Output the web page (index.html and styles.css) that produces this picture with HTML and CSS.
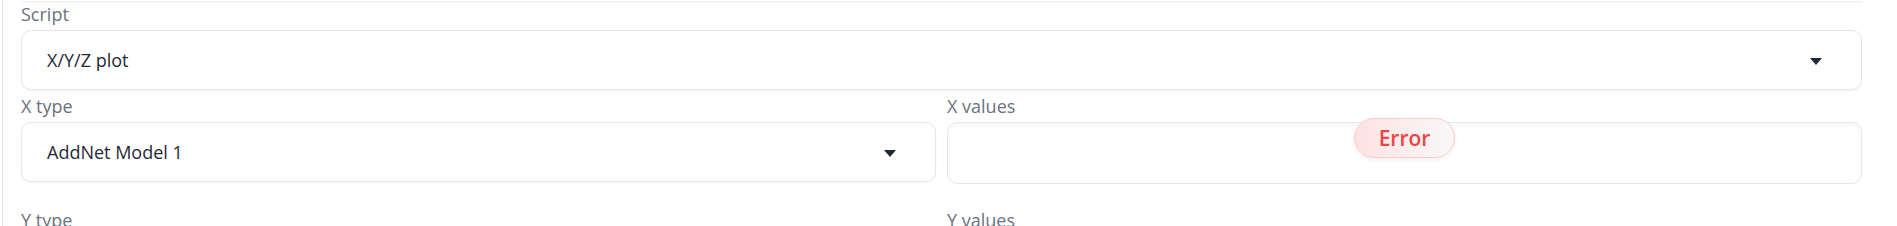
FILE: index.html
```html
<!DOCTYPE html>
<html>
<head>
  <title>X/Y/Z plot</title>
  <link rel="stylesheet" href="styles.css">
</head>
<body>
  <div class="panel">
    <div class="prev-block"></div>

    <div class="field field-script">
      <span class="label">Script</span>
      <div class="select">
        <span class="select-value">X/Y/Z plot</span>
        <svg class="arrow" width="12" height="7" viewBox="0 0 12 7"><path d="M0 0H12L6 7Z" fill="#1f2937"/></svg>
      </div>
    </div>

    <div class="row row-x">
      <div class="field">
        <span class="label">X type</span>
        <div class="select">
          <span class="select-value">AddNet Model 1</span>
          <svg class="arrow" width="12" height="7" viewBox="0 0 12 7"><path d="M0 0H12L6 7Z" fill="#1f2937"/></svg>
        </div>
      </div>
      <div class="field field-status">
        <span class="label">X values</span>
        <div class="textbox"></div>
        <div class="status">
          <span class="error-badge">Error</span>
        </div>
      </div>
    </div>

    <div class="row">
      <div class="field">
        <span class="label">Y type</span>
      </div>
      <div class="field">
        <span class="label">Y values</span>
      </div>
    </div>
  </div>
</body>
</html>
```
FILE: styles.css
```css
body {
  margin: 0;
  padding: 0;
  background-color: white;
  font-family: "Open Sans", "Noto Sans", sans-serif;
  overflow: hidden;
}

.panel {
  margin-left: 2px;
  border-left: 1px solid #e5e7eb;
  padding: 0 35px 0 18px;
  height: 226px;
}

.prev-block {
  height: 1px;
  border-bottom: 1px solid #eceef1;
  border-radius: 0 0 8px 8px;
  box-shadow: 0 1px 3px rgba(0, 0, 0, 0.04);
}

.field {
  display: flex;
  flex-direction: column;
}

.field-script {
  margin-bottom: 4px;
}

.label {
  display: block;
  font-size: 18px;
  line-height: 24px;
  color: #6b7280;
  margin-bottom: 4px;
}

.select {
  box-sizing: border-box;
  height: 60px;
  display: flex;
  align-items: center;
  justify-content: space-between;
  padding: 0 39px 0 25px;
  border: 1px solid #e5e7eb;
  border-radius: 10px;
  background-color: white;
  box-shadow: 0 1px 2px rgba(0, 0, 0, 0.05);
}

.select-value {
  font-size: 18px;
  color: #1f2937;
}

.arrow {
  display: block;
  margin-top: 2px;
}

.row {
  display: grid;
  grid-template-columns: 1fr 1fr;
  column-gap: 11px;
}

.row-x {
  margin-bottom: 24px;
}

.textbox {
  box-sizing: border-box;
  height: 62px;
  border: 1px solid #e5e7eb;
  border-radius: 10px;
  background-color: white;
  box-shadow: inset 0 2px 4px rgba(0, 0, 0, 0.04);
}

.field-status {
  position: relative;
}

.status {
  position: absolute;
  top: 0;
  left: 0;
  right: 0;
  bottom: 0;
  display: flex;
  align-items: center;
  justify-content: center;
}

.error-badge {
  box-sizing: border-box;
  height: 40px;
  display: flex;
  align-items: center;
  padding: 0 24px;
  margin-top: -2px;
  border: 1px solid #fecaca;
  border-radius: 20px;
  background: linear-gradient(to right, #fee2e2, #f8f8f9);
  box-shadow: 0 2px 4px rgba(0, 0, 0, 0.06);
  color: #ef4444;
  font-size: 21px;
  font-weight: 600;
}
```
